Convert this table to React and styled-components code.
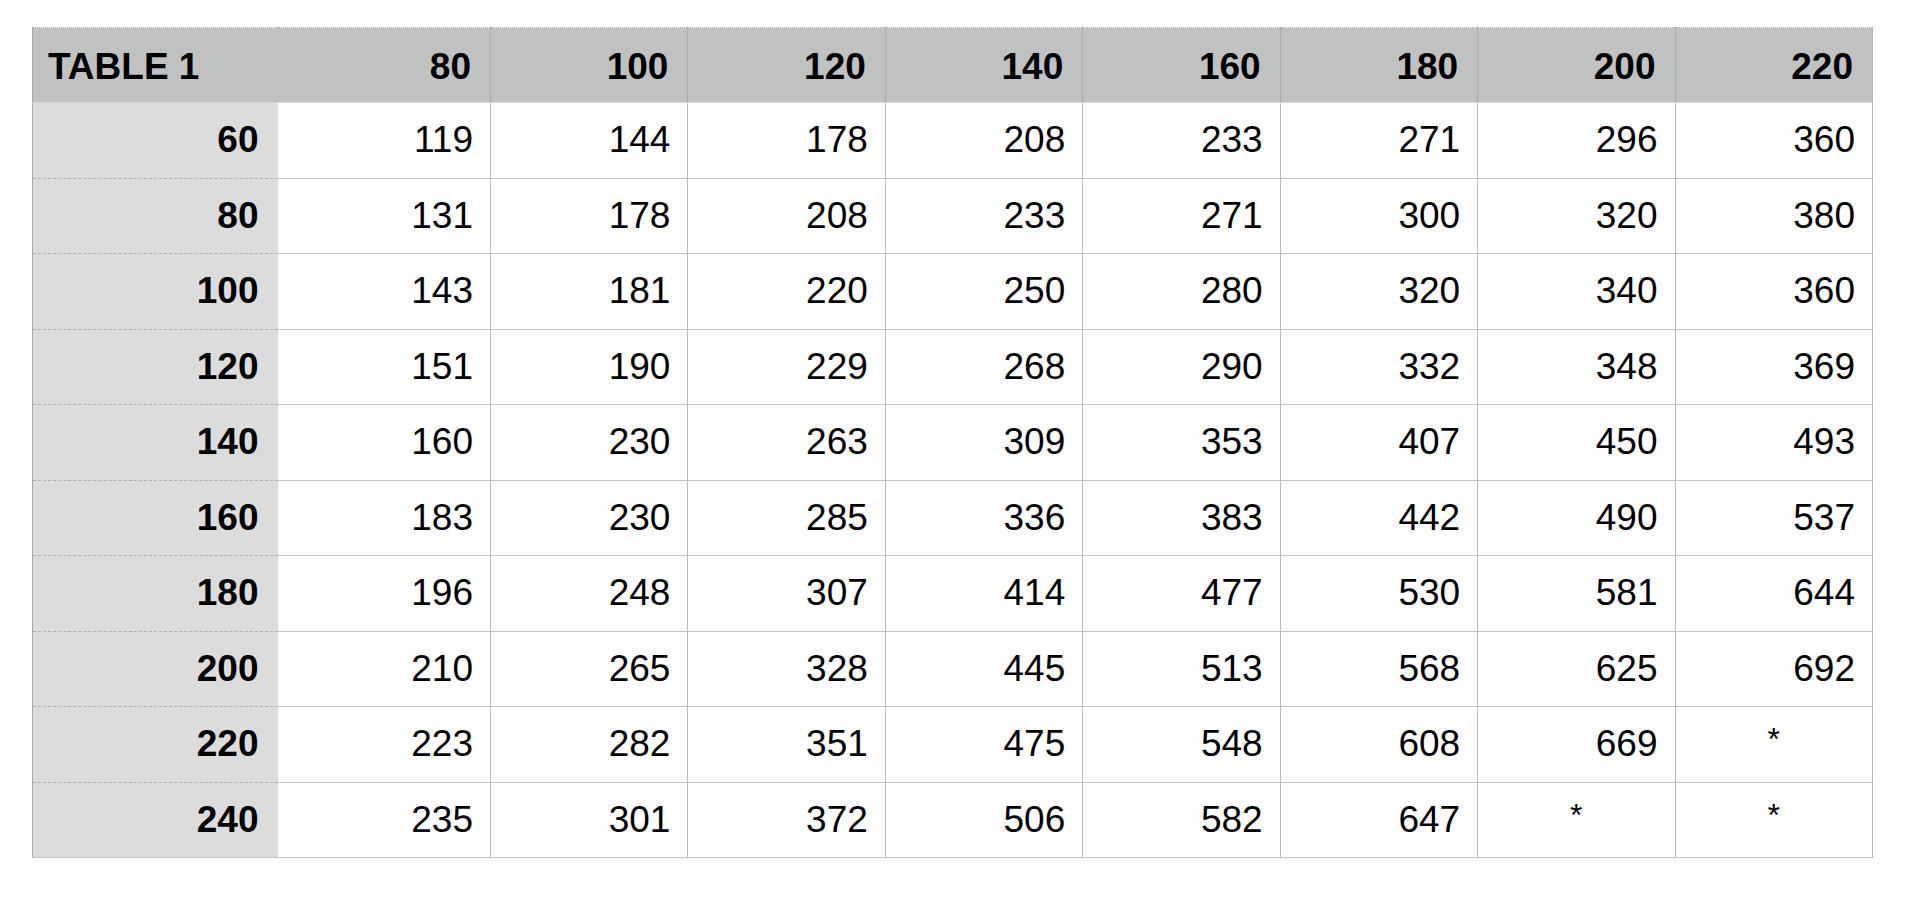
import React from "react";
import styled, { createGlobalStyle } from "styled-components";

const columns = [80, 100, 120, 140, 160, 180, 200, 220];

const rows = [
  [60, [119, 144, 178, 208, 233, 271, 296, 360]],
  [80, [131, 178, 208, 233, 271, 300, 320, 380]],
  [100, [143, 181, 220, 250, 280, 320, 340, 360]],
  [120, [151, 190, 229, 268, 290, 332, 348, 369]],
  [140, [160, 230, 263, 309, 353, 407, 450, 493]],
  [160, [183, 230, 285, 336, 383, 442, 490, 537]],
  [180, [196, 248, 307, 414, 477, 530, 581, 644]],
  [200, [210, 265, 328, 445, 513, 568, 625, 692]],
  [220, [223, 282, 351, 475, 548, 608, 669, "*"]],
  [240, [235, 301, 372, 506, 582, 647, "*", "*"]],
];

const GlobalStyle = createGlobalStyle`
  html, body {
    margin: 0;
    padding: 0;
    background: #fff;
  }
  body {
    font-family: "Liberation Sans", Arial, Helvetica, sans-serif;
    color: #000;
  }
`;

const Page = styled.div`
  padding: 27px 0 0 32px;
`;

const Table = styled.table`
  border-collapse: collapse;
  table-layout: fixed;
  width: 1841px;
  font-size: 37px;
  border-left: 1px solid #a8a8a8;
  border-right: 1px solid #b8b8b8;
  border-bottom: 1px solid #c4c4c4;
`;

const HeadRow = styled.tr`
  height: 75px;
  background: #c0c2c1;
`;

const Row = styled.tr`
  height: 75.5px;
`;

const HeadCell = styled.th`
  padding: 3px 19px 0;
  font-weight: 700;
  text-align: ${(p) => (p.$left ? "left" : "right")};
  padding-left: ${(p) => (p.$left ? "15px" : "19px")};
  border-top: 1px dotted #a9aaaa;
  border-bottom: 1px solid #d6d7d6;
  border-left: ${(p) => (p.$bare ? "none" : "1px solid #acadad")};
`;

const StubCell = styled.th`
  padding: 0 19px;
  font-weight: 700;
  text-align: right;
  background: #dcdcdc;
  border-top: 1px dashed #b0b0b0;
`;

const Cell = styled.td`
  padding: 0 ${(p) => (p.$star ? "0" : "17px")};
  text-align: ${(p) => (p.$star ? "center" : "right")};
  border-top: 1px solid #c6c6c6;
  border-left: ${(p) => (p.$first ? "none" : "1px solid #bcbcbc")};
`;

const Star = styled.span`
  position: relative;
  top: -6px;
  font-size: 32px;
`;

export default function App() {
  return (
    <>
      <GlobalStyle />
      <Page>
        <Table>
          <colgroup>
            <col style={{ width: 245 }} />
            <col style={{ width: 213 }} />
            {columns.slice(1).map((c) => (
              <col key={c} />
            ))}
          </colgroup>
          <thead>
            <HeadRow>
              <HeadCell $left $bare>TABLE 1</HeadCell>
              {columns.map((c, i) => (
                <HeadCell key={c} $bare={i === 0}>
                  {c}
                </HeadCell>
              ))}
            </HeadRow>
          </thead>
          <tbody>
            {rows.map(([label, values]) => (
              <Row key={label}>
                <StubCell>{label}</StubCell>
                {values.map((v, i) => (
                  <Cell key={i} $first={i === 0} $star={v === "*"}>
                    {v === "*" ? <Star>*</Star> : v}
                  </Cell>
                ))}
              </Row>
            ))}
          </tbody>
        </Table>
      </Page>
    </>
  );
}
